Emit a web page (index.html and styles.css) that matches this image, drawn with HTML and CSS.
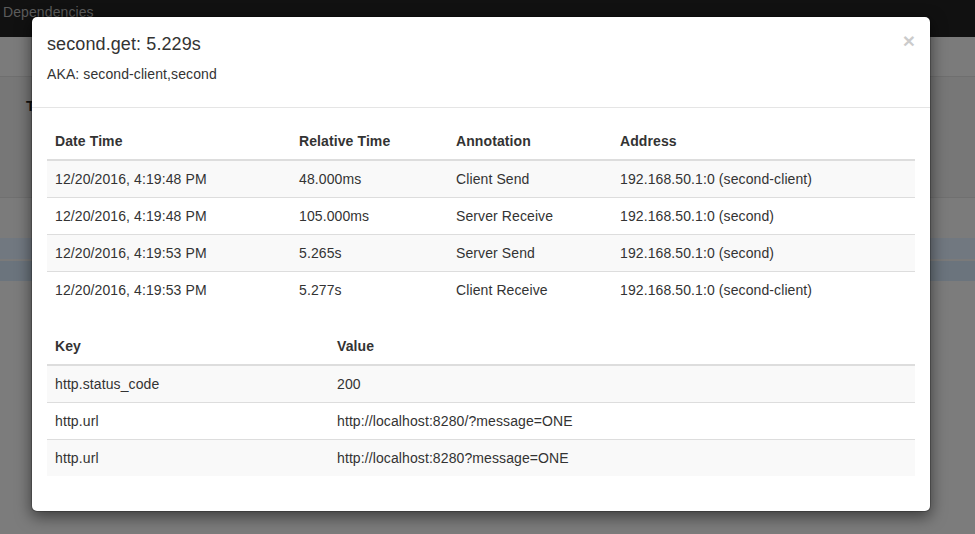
FILE: index.html
```html
<!DOCTYPE html>
<html>
<head>
<meta charset="utf-8">
<link rel="stylesheet" href="styles.css">
</head>
<body>
<div class="page">
  <div class="navbar"><span class="nav-link">Dependencies</span></div>
  <div class="subbar"></div>
  <div class="panel"><h4 class="panel-title">Trace</h4></div>
  <div class="strip"></div>
  <div class="row-blue"></div>
  <div class="row-gap"></div>
  <div class="row-blue row-blue-2"></div>
  <div class="rest"></div>
</div>

<div class="modal">
  <div class="modal-header">
    <button class="close" type="button">&times;</button>
    <h4 class="modal-title">second.get: 5.229s</h4>
    <div class="aka">AKA: second-client,second</div>
  </div>
  <div class="modal-body">
    <table class="table">
      <colgroup>
        <col class="c-date"><col class="c-rel"><col class="c-ann"><col>
      </colgroup>
      <thead>
        <tr><th>Date Time</th><th>Relative Time</th><th>Annotation</th><th>Address</th></tr>
      </thead>
      <tbody>
        <tr><td>12/20/2016, 4:19:48 PM</td><td>48.000ms</td><td>Client Send</td><td>192.168.50.1:0 (second-client)</td></tr>
        <tr><td>12/20/2016, 4:19:48 PM</td><td>105.000ms</td><td>Server Receive</td><td>192.168.50.1:0 (second)</td></tr>
        <tr><td>12/20/2016, 4:19:53 PM</td><td>5.265s</td><td>Server Send</td><td>192.168.50.1:0 (second)</td></tr>
        <tr><td>12/20/2016, 4:19:53 PM</td><td>5.277s</td><td>Client Receive</td><td>192.168.50.1:0 (second-client)</td></tr>
      </tbody>
    </table>
    <table class="table">
      <colgroup>
        <col class="c-key"><col>
      </colgroup>
      <thead>
        <tr><th>Key</th><th>Value</th></tr>
      </thead>
      <tbody>
        <tr><td>http.status_code</td><td>200</td></tr>
        <tr><td>http.url</td><td>http://localhost:8280/?message=ONE</td></tr>
        <tr><td>http.url</td><td>http://localhost:8280?message=ONE</td></tr>
      </tbody>
    </table>
  </div>
</div>
</body>
</html>
```

FILE: styles.css
```css
* { box-sizing: border-box; }
html, body {
  margin: 0;
  padding: 0;
  height: 100%;
  overflow: hidden;
}
body {
  font-family: "Liberation Sans", Arial, sans-serif;
  font-size: 14px;
  line-height: 20px;
  letter-spacing: 0.1px;
  color: #333;
  background: #7d7d7d;
}

/* background page (already dimmed by the backdrop) */
.page {
  display: flex;
  flex-direction: column;
  height: 100%;
}
.navbar {
  height: 37px;
  background: #111;
  padding: 0 3px;
}
.nav-link {
  display: block;
  color: #5c5c5c;
  font-size: 14px;
  line-height: 24px;
}
.subbar {
  height: 40px;
  background: #7b7b7b;
  border-bottom: 1px solid #6f6f6f;
}
.panel {
  height: 121px;
  background: #777;
  border-bottom: 1px solid #707070;
  padding: 19px 26px 0;
}
.panel-title {
  margin: 0;
  font-size: 15px;
  line-height: 20px;
  font-weight: bold;
  color: #111;
}
.strip {
  height: 40px;
  background: #7b7b7b;
}
.row-blue {
  height: 21px;
  background: #717880;
}
.row-gap {
  height: 2px;
  background: #7a7a7a;
}
.row-blue-2 {
  height: 20px;
  background: #6b747d;
}
.rest {
  flex: 1;
  background: #7c7c7c;
}

/* modal (overlay) */
.modal {
  position: absolute;
  top: 16px;
  left: 31px;
  width: 900px;
  background: #fff;
  border: 1px solid rgba(0, 0, 0, 0.2);
  border-radius: 6px;
  box-shadow: 0 5px 15px rgba(0, 0, 0, 0.5);
  background-clip: padding-box;
}
.modal-header {
  padding: 15px;
  border-bottom: 1px solid #e5e5e5;
}
.modal-title {
  margin: 0;
  font-size: 18px;
  font-weight: normal;
  line-height: 1.42857;
  color: #333;
}
.aka {
  margin: 6px 0 8px;
}
.close {
  float: right;
  margin-top: -2px;
  padding: 0;
  border: 0;
  background: transparent;
  font-family: "Liberation Sans", Arial, sans-serif;
  font-size: 21px;
  font-weight: bold;
  line-height: 1;
  color: #000;
  opacity: 0.2;
}
.modal-body {
  padding: 15px;
}

.table {
  width: 100%;
  border-collapse: collapse;
  border-spacing: 0;
  margin-bottom: 20px;
}
.table th,
.table td {
  padding: 8px;
  text-align: left;
  vertical-align: top;
  line-height: 20px;
  border-top: 1px solid #ddd;
}
.table thead th {
  border-top: 0;
  border-bottom: 2px solid #ddd;
  font-weight: bold;
}
.table tbody tr:nth-child(odd) td {
  background: #f9f9f9;
}
.c-date { width: 244px; }
.c-rel { width: 157px; }
.c-ann { width: 164px; }
.c-key { width: 282px; }
```
